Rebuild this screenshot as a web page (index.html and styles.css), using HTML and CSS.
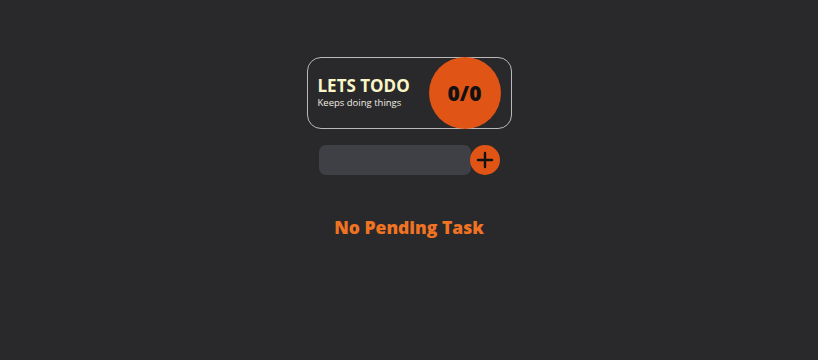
FILE: index.html
```html
<!DOCTYPE html>
<html lang="en">
<head>
  <meta charset="UTF-8">
  <meta name="viewport" content="width=device-width, initial-scale=1.0">
  <title>Lets Todo</title>
  <link rel="stylesheet" href="styles.css">
</head>
<body>
  <div class="app">
    <div class="header-card">
      <div class="header-text">
        <h1>LETS TODO</h1>
        <p>Keeps doing things</p>
      </div>
      <div class="counter">0/0</div>
    </div>
    <form class="add-form">
      <input type="text" class="task-input">
      <button type="button" class="add-btn">
        <svg width="18" height="18" viewBox="0 0 18 18"><path d="M9 2v14M2 9h14" stroke="#111" stroke-width="2.4" stroke-linecap="round"/></svg>
      </button>
    </form>
    <p class="empty">No Pending Task</p>
  </div>
</body>
</html>
```

FILE: styles.css
```css
html, body {
  margin: 0;
  height: 100%;
}

body {
  background: #29292b;
  font-family: "Open Sans", "Liberation Sans", sans-serif;
}

.app {
  display: flex;
  flex-direction: column;
  align-items: center;
  padding-top: 57px;
}

.header-card {
  width: 205px;
  height: 72px;
  box-sizing: border-box;
  border: 1px solid #b9b9b9;
  border-radius: 14px;
  display: flex;
  align-items: center;
  justify-content: space-between;
  padding-left: 10px;
}

.header-text h1 {
  margin: 0;
  font-size: 17px;
  font-weight: 700;
  color: #fbf6c8;
  line-height: 20px;
}

.header-text p {
  margin: 0;
  font-size: 9.5px;
  color: #f0ece0;
  line-height: 14px;
}

.counter {
  width: 72px;
  height: 72px;
  margin-right: 10px;
  border-radius: 50%;
  background: #e05416;
  color: #111;
  font-size: 21px;
  font-weight: 800;
  display: flex;
  align-items: center;
  justify-content: center;
}

.add-form {
  display: flex;
  align-items: center;
  margin-top: 16px;
}

.task-input {
  width: 152px;
  height: 30px;
  box-sizing: border-box;
  border: none;
  border-radius: 7px;
  background: #3f4046;
  outline: none;
}

.add-btn {
  width: 30px;
  height: 30px;
  margin-left: -1px;
  padding: 0;
  border: none;
  border-radius: 50%;
  background: #e05416;
  display: flex;
  align-items: center;
  justify-content: center;
}

.empty {
  margin: 40px 0 0;
  font-size: 17.5px;
  font-weight: 800;
  color: #f07323;
}
```
